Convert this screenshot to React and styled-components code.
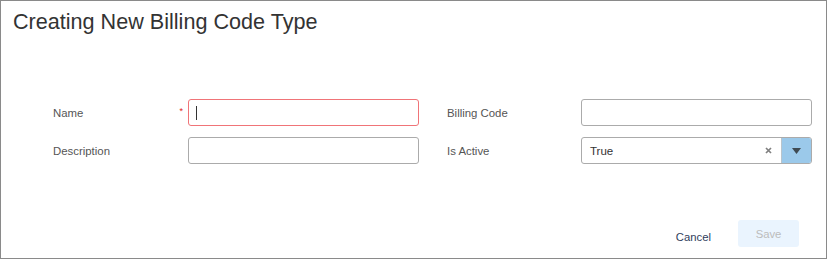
import React from "react";
import styled, { createGlobalStyle } from "styled-components";

const GlobalStyle = createGlobalStyle`
    html, body {
        margin: 0;
        padding: 0;
        background: #fff;
    }
    * {
        box-sizing: border-box;
    }
`;

const Frame = styled.div`
    width: 827px;
    height: 259px;
    border: 1px solid #8a8a8a;
    display: flex;
    flex-direction: column;
    font-family: "Liberation Sans", Arial, sans-serif;
    color: #333;
`;

const Title = styled.h1`
    margin: 0;
    padding: 9px 12px 0;
    font-size: 21.6px;
    line-height: 24px;
    font-weight: normal;
    color: #333;
`;

const Form = styled.div`
    display: flex;
    flex-direction: column;
    gap: 11px;
    padding: 65px 0 0 52px;
`;

const Row = styled.div`
    display: flex;
    gap: 28px;
`;

const Field = styled.div`
    display: grid;
    grid-template-columns: ${(p) => p.$labelWidth}px 231px;
    align-items: center;
`;

const Label = styled.label`
    display: flex;
    justify-content: space-between;
    align-items: center;
    padding-right: 5px;
    font-size: 11.4px;
    color: #555;
`;

const Required = styled.span`
    color: #e21b1b;
    font-size: 9px;
    line-height: 1;
    margin-top: -3px;
`;

const TextBox = styled.div`
    height: 27px;
    border: 1px solid ${(p) => (p.$invalid ? "#f07478" : "#ababab")};
    border-radius: 3px;
    background: #fff;
    display: flex;
    align-items: center;
    padding-left: 7px;
`;

const Caret = styled.span`
    width: 1px;
    height: 14px;
    background: #333;
`;

const Select = styled.div`
    height: 27px;
    border: 1px solid #ababab;
    border-radius: 3px;
    display: flex;
    align-items: stretch;
    overflow: hidden;
`;

const SelectValue = styled.div`
    flex: 1;
    display: flex;
    align-items: center;
    padding-left: 8px;
    font-size: 11.5px;
    color: #333;
`;

const ClearButton = styled.div`
    width: 25px;
    display: flex;
    align-items: center;
    justify-content: center;
`;

const DropButton = styled.div`
    width: 30px;
    background: #9bc9ea;
    border-left: 1px solid #b9c4cc;
    display: flex;
    align-items: center;
    justify-content: center;
`;

const Footer = styled.div`
    margin-top: auto;
    display: flex;
    justify-content: flex-end;
    align-items: center;
    gap: 27px;
    padding: 0 27px 11px 0;
`;

const CancelButton = styled.button`
    border: none;
    background: none;
    padding: 6px 0 0;
    font-family: inherit;
    font-size: 11.3px;
    color: #2f3d5c;
`;

const SaveButton = styled.button`
    width: 61px;
    height: 27px;
    border: none;
    border-radius: 3px;
    background: #eaf4fe;
    font-family: inherit;
    font-size: 11.3px;
    color: #bcbcbc;
`;

function App() {
    return (
        <>
            <GlobalStyle />
            <Frame>
                <Title>Creating New Billing Code Type</Title>
                <Form>
                    <Row>
                        <Field $labelWidth={135}>
                            <Label>
                                Name <Required>*</Required>
                            </Label>
                            <TextBox $invalid>
                                <Caret />
                            </TextBox>
                        </Field>
                        <Field $labelWidth={134}>
                            <Label>Billing Code</Label>
                            <TextBox />
                        </Field>
                    </Row>
                    <Row>
                        <Field $labelWidth={135}>
                            <Label>Description</Label>
                            <TextBox />
                        </Field>
                        <Field $labelWidth={134}>
                            <Label>Is Active</Label>
                            <Select>
                                <SelectValue>True</SelectValue>
                                <ClearButton>
                                    <svg width="7" height="7" viewBox="0 0 7 7">
                                        <path
                                            d="M1 1L6 6M6 1L1 6"
                                            stroke="#808080"
                                            strokeWidth="1.7"
                                        />
                                    </svg>
                                </ClearButton>
                                <DropButton>
                                    <svg width="9" height="6" viewBox="0 0 9 6">
                                        <path d="M0 0H9L4.5 6Z" fill="#3f4a52" />
                                    </svg>
                                </DropButton>
                            </Select>
                        </Field>
                    </Row>
                </Form>
                <Footer>
                    <CancelButton>Cancel</CancelButton>
                    <SaveButton>Save</SaveButton>
                </Footer>
            </Frame>
        </>
    );
}

export default App;
